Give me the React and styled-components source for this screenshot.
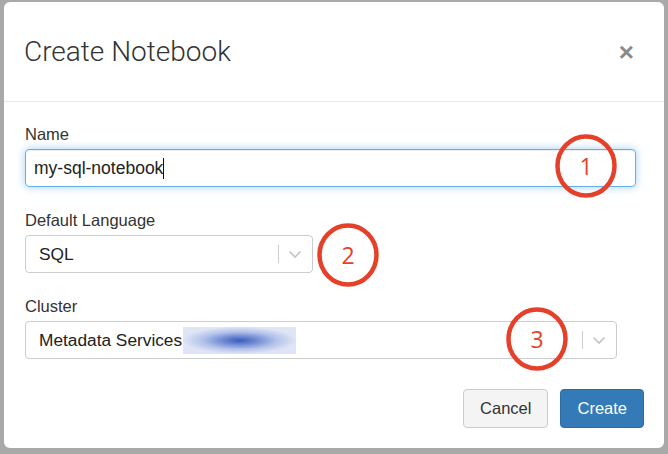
import React from 'react';
import styled, { createGlobalStyle } from 'styled-components';

const GlobalStyle = createGlobalStyle`
  html, body {
    margin: 0;
    background: #a9a9a9;
  }
  body {
    font-family: "Liberation Sans", Arial, sans-serif;
    color: #333;
  }
`;

export default function App() {
  return (
    <>
      <GlobalStyle />
      <Backdrop>
        <Modal>
          <Header>
            <Title>Create Notebook</Title>
            <Close>×</Close>
          </Header>
          <Body>
            <Field>
              <Label>Name</Label>
              <TextInput>
                my-sql-notebook
                <Caret />
              </TextInput>
            </Field>
            <Field>
              <Label>Default Language</Label>
              <Select $width={288}>
                <SelectValue>SQL</SelectValue>
                <SelectControls>
                  <Divider />
                  <Chevron />
                </SelectControls>
              </Select>
            </Field>
            <Field>
              <Label>Cluster</Label>
              <Select $width={592}>
                <SelectValue>
                  Metadata Services
                  <Redacted />
                </SelectValue>
                <SelectControls>
                  <Divider />
                  <Chevron />
                </SelectControls>
              </Select>
            </Field>
          </Body>
          <Footer>
            <Button>Cancel</Button>
            <Button $primary>Create</Button>
          </Footer>

          <Marker $x={554} $y={133} number="1" />
          <Marker $x={316} $y={222} number="2" />
          <Marker $x={505} $y={306} number="3" />
        </Modal>
      </Backdrop>
    </>
  );
}

function Chevron() {
  return (
    <svg width='14' height='9' viewBox='0 0 14 9'>
      <path d='M1.5 1.5 L7 7 L12.5 1.5' fill='none' stroke='#c4c4c4' strokeWidth='1.6' />
    </svg>
  );
}

function Marker({ $x, $y, number }) {
  return (
    <MarkerWrap style={{ left: $x - 4, top: $y - 2 }}>
      <svg width='64' height='66' viewBox='0 0 64 66'>
        <ellipse cx='32' cy='33' rx='28.5' ry='29.5' fill='none' stroke='#e5412a' strokeWidth='4.5' />
      </svg>
      <MarkerNumber>{number}</MarkerNumber>
    </MarkerWrap>
  );
}

const Backdrop = styled.div`
  padding: 2px 4px 6px 4px;
  height: 454px;
  box-sizing: border-box;
`;

const Modal = styled.div`
  position: relative;
  height: 446px;
  background: #fff;
  border-radius: 6px;
  display: flex;
  flex-direction: column;
`;

const Header = styled.div`
  height: 99px;
  border-bottom: 1px solid #e9e9e9;
  display: flex;
  align-items: center;
  justify-content: space-between;
  padding: 0 30px 0 20px;
`;

const Title = styled.h4`
  margin: 0;
  font-family: Roboto, "Liberation Sans", sans-serif;
  font-weight: 300;
  font-size: 28px;
  color: #333;
`;

const Close = styled.span`
  font-size: 26px;
  font-weight: bold;
  color: #8a8a8a;
  line-height: 1;
`;

const Body = styled.div`
  padding: 21px 28px 0 21px;
  display: flex;
  flex-direction: column;
  gap: 22px;
`;

const Field = styled.div`
  display: flex;
  flex-direction: column;
  gap: 4px;
`;

const Label = styled.label`
  font-size: 16.5px;
  line-height: 22px;
  color: #333;
`;

const TextInput = styled.div`
  height: 38px;
  box-sizing: border-box;
  border: 1px solid #66afe9;
  border-radius: 4px;
  box-shadow: inset 0 1px 1px rgba(0, 0, 0, 0.075), 0 0 8px rgba(102, 175, 233, 0.6);
  display: flex;
  align-items: center;
  padding: 0 8px;
  font-size: 17.5px;
  color: #222;
`;

const Caret = styled.span`
  display: inline-block;
  width: 1px;
  height: 21px;
  background: #111;
`;

const Select = styled.div`
  width: ${(p) => p.$width}px;
  height: 38px;
  box-sizing: border-box;
  border: 1px solid #ccc;
  border-radius: 4px;
  display: flex;
  align-items: center;
  justify-content: space-between;
  padding: 0 10px 0 13px;
`;

const SelectValue = styled.div`
  display: flex;
  align-items: center;
  font-size: 17.3px;
  color: #222;
`;

const SelectControls = styled.div`
  display: flex;
  align-items: center;
  gap: 9px;
`;

const Divider = styled.span`
  width: 1px;
  height: 18px;
  background: #ccc;
`;

const Redacted = styled.span`
  display: inline-block;
  width: 113px;
  height: 27px;
  margin-left: 1px;
  background: radial-gradient(ellipse 50% 50% at 50% 50%, #3a5bbf 0%, #6f8ad2 30%, #b3c2ea 65%, #dfe5f6 100%);
`;

const Footer = styled.div`
  margin-top: auto;
  padding: 0 20px 20px 0;
  display: flex;
  justify-content: flex-end;
  gap: 12px;
`;

const Button = styled.button`
  height: 39px;
  padding: 0 16px;
  border-radius: 4px;
  font-family: "Liberation Sans", Arial, sans-serif;
  font-size: 16.5px;
  border: 1px solid ${(p) => (p.$primary ? '#2e6da4' : '#ccc')};
  background: ${(p) => (p.$primary ? '#337ab7' : '#f4f4f4')};
  color: ${(p) => (p.$primary ? '#fff' : '#333')};
`;

const MarkerWrap = styled.div`
  position: absolute;
  width: 64px;
  height: 66px;
`;

const MarkerNumber = styled.span`
  position: absolute;
  inset: 0;
  display: flex;
  align-items: center;
  justify-content: center;
  font-family: "Open Sans", "Liberation Sans", sans-serif;
  font-size: 23px;
  color: #e5412a;
`;
